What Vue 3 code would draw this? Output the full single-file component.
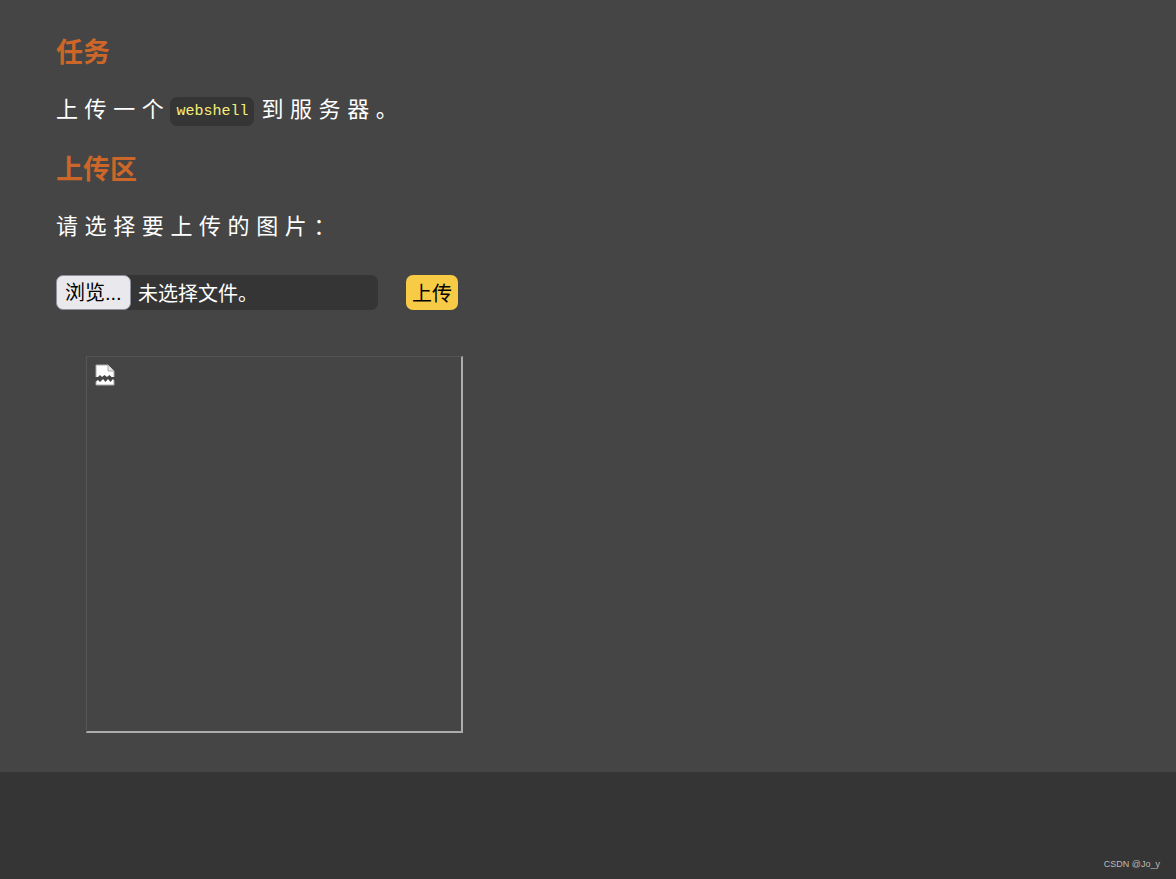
<script setup>
import { ref } from 'vue'

const fileName = ref('未选择文件。')

function onPick(event) {
  const file = event.target.files[0]
  fileName.value = file ? file.name : '未选择文件。'
}
</script>

<template>
  <div class="page">
    <main class="panel">
      <section>
        <h3>任务</h3>
        <p>上传一个<code>webshell</code>到服务器。</p>
      </section>
      <section>
        <h3>上传区</h3>
        <form @submit.prevent>
          <p id="hint">请选择要上传的图片：</p>
          <div class="controls">
            <label class="picker" for="upload-file">
              <input id="upload-file" type="file" aria-describedby="hint" @change="onPick" />
              <span class="browse">浏览...</span>
              <span class="name">{{ fileName }}</span>
            </label>
            <button class="submit" type="submit">上传</button>
          </div>
        </form>
        <div class="preview">
          <svg class="broken" viewBox="0 0 20 23" aria-hidden="true">
            <path d="M1 1H13L19 7V21H1Z" fill="#fff" stroke="#aaa" />
            <path d="M13 1V7H19" fill="#e4e4e4" stroke="#aaa" />
            <path d="M0 13H3L5 11L7 13L9.500 11L12 13L14.500 11L16.500 13H20V17L18 15L15.500 18L13 15L10.500 18L8 15L5 18L3 16L0 18Z" fill="#454545" />
          </svg>
        </div>
      </section>
    </main>
    <footer>CSDN @Jo_y</footer>
  </div>
</template>

<style>
body {
  margin: 0;
  background: #353535;
}
</style>

<style scoped>
.page {
  display: flex;
  flex-direction: column;
  min-height: 100vh;
  font-family: "Liberation Sans", "Noto Sans CJK SC", sans-serif;
  color: #fff;
  background: #353535;
}

.panel {
  padding: 33px 56px 39px;
  background: #454545;
}

h3 {
  margin: 0;
  font-size: 27px;
  line-height: 40px;
  font-weight: 700;
  color: #cd6629;
}

p {
  margin: 17px 0 20px;
  font-size: 22px;
  line-height: 40px;
  letter-spacing: 0.3em;
}

code {
  display: inline-block;
  margin-right: 7px;
  padding: 0 6px;
  border-radius: 7px;
  background: #353535;
  color: #f5f07a;
  font-family: "Liberation Mono", monospace;
  font-size: 15px;
  line-height: 29px;
  letter-spacing: 0;
  vertical-align: middle;
}

.controls {
  display: flex;
  align-items: center;
  gap: 28px;
  margin-top: 28px;
  font-size: 20px;
}

.picker {
  position: relative;
  display: flex;
  align-items: center;
  width: 322px;
  height: 35px;
  border-radius: 7px;
  background: #353535;
  cursor: pointer;
}

.picker input {
  position: absolute;
  inset: 0;
  width: 100%;
  opacity: 0;
  cursor: pointer;
}

.browse {
  box-sizing: border-box;
  width: 75px;
  height: 35px;
  padding-left: 8px;
  border: 1px solid #8f8f9d;
  border-radius: 7px;
  background: #e9e9ed;
  color: #000;
  line-height: 35px;
}

.name {
  margin-left: 7px;
}

.submit {
  height: 35px;
  padding: 0 6px;
  border: 0;
  border-radius: 7px;
  background: #f7cb45;
  color: #000;
  font: inherit;
}

.preview {
  box-sizing: border-box;
  width: 377px;
  height: 377px;
  margin: 46px 0 0 30px;
  padding: 7px 8px;
  border: solid;
  border-width: 1px 2px 2px 1px;
  border-color: #555 #acacac #acacac #555;
}

.broken {
  display: block;
  width: 20px;
  height: 23px;
}

footer {
  margin-top: auto;
  padding: 0 16px 9px;
  font-size: 9px;
  line-height: 12px;
  text-align: right;
  color: #bbb;
}
</style>
